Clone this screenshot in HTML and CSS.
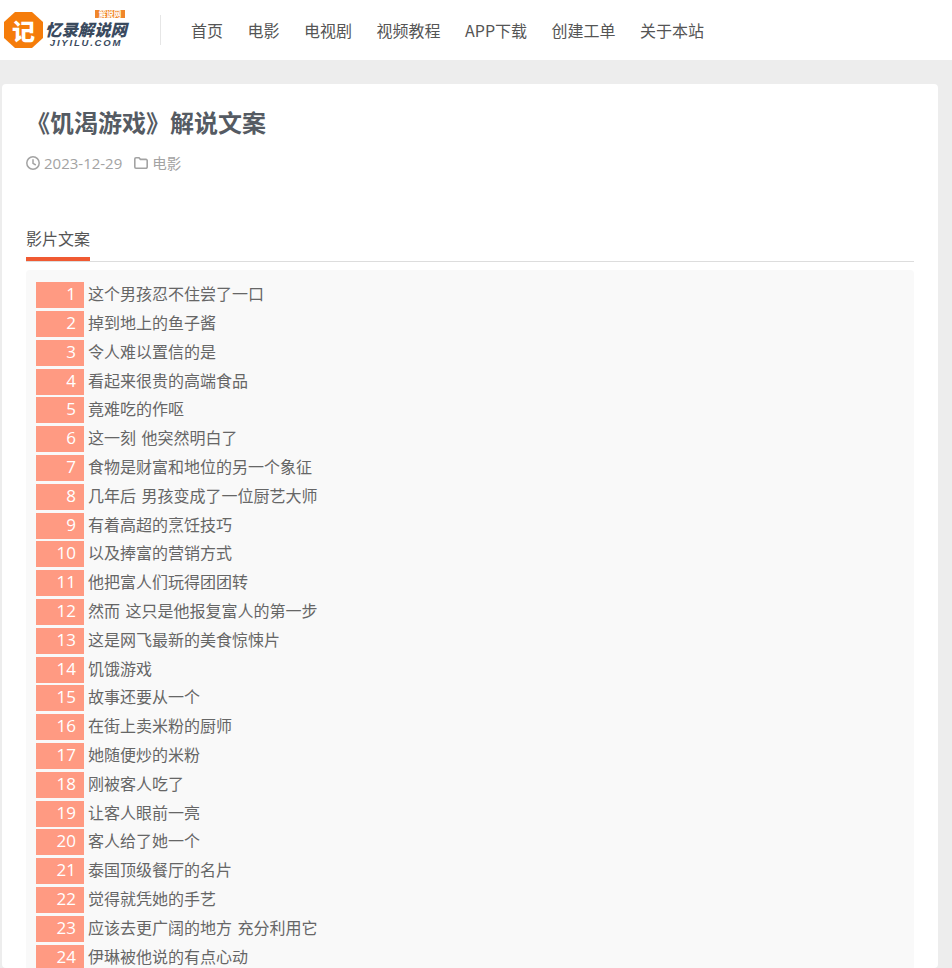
FILE: index.html
```html
<!DOCTYPE html>
<html lang="zh-CN">
<head>
<meta charset="utf-8">
<title>《饥渴游戏》解说文案</title>
<link rel="stylesheet" href="styles.css">
</head>
<body>
<header class="topbar">
  <a class="logo">
    <svg class="logo-mark" width="39" height="36" viewBox="0 0 39 36"><polygon points="11,0 28,0 39,10 39,26 28,36 11,36 0,26 0,10" fill="#f57c0a"/></svg>
    <span class="logo-mark-text">记</span>
    <span class="logo-words">
      <span class="logo-cn">忆录解说网</span>
      <span class="logo-en">JIYILU.COM</span>
    </span>
    <span class="logo-tag">解说网</span>
  </a>
  <nav class="nav">
    <a>首页</a><a>电影</a><a>电视剧</a><a>视频教程</a><a>APP下载</a><a>创建工单</a><a>关于本站</a>
  </nav>
</header>
<main class="card">
  <h1 class="title">《饥渴游戏》解说文案</h1>
  <div class="meta">
    <span class="meta-item meta-date">
      <svg width="14" height="14" viewBox="0 0 14 14" fill="none" stroke="#a3a3a3" stroke-width="1.5"><circle cx="7" cy="7" r="6.2"/><path d="M7 3.2V7.4L9.8 9"/></svg>
      2023-12-29
    </span>
    <span class="meta-item">
      <svg width="14" height="12" viewBox="0 0 14 12" fill="none" stroke="#a3a3a3" stroke-width="1.6"><path d="M.8 2a1.2 1.2 0 0 1 1.2-1.2H5L6.4 2.4H12A1.2 1.2 0 0 1 13.2 3.6V10A1.2 1.2 0 0 1 12 11.2H2A1.2 1.2 0 0 1 .8 10Z"/></svg>
      电影
    </span>
  </div>
  <div class="tabs"><span class="tab">影片文案</span></div>
  <ol class="script">
    <li><span class="num">1</span>这个男孩忍不住尝了一口</li>
    <li><span class="num">2</span>掉到地上的鱼子酱</li>
    <li><span class="num">3</span>令人难以置信的是</li>
    <li><span class="num">4</span>看起来很贵的高端食品</li>
    <li><span class="num">5</span>竟难吃的作呕</li>
    <li><span class="num">6</span>这一刻 他突然明白了</li>
    <li><span class="num">7</span>食物是财富和地位的另一个象征</li>
    <li><span class="num">8</span>几年后 男孩变成了一位厨艺大师</li>
    <li><span class="num">9</span>有着高超的烹饪技巧</li>
    <li><span class="num">10</span>以及捧富的营销方式</li>
    <li><span class="num">11</span>他把富人们玩得团团转</li>
    <li><span class="num">12</span>然而 这只是他报复富人的第一步</li>
    <li><span class="num">13</span>这是网飞最新的美食惊悚片</li>
    <li><span class="num">14</span>饥饿游戏</li>
    <li><span class="num">15</span>故事还要从一个</li>
    <li><span class="num">16</span>在街上卖米粉的厨师</li>
    <li><span class="num">17</span>她随便炒的米粉</li>
    <li><span class="num">18</span>刚被客人吃了</li>
    <li><span class="num">19</span>让客人眼前一亮</li>
    <li><span class="num">20</span>客人给了她一个</li>
    <li><span class="num">21</span>泰国顶级餐厅的名片</li>
    <li><span class="num">22</span>觉得就凭她的手艺</li>
    <li><span class="num">23</span>应该去更广阔的地方 充分利用它</li>
    <li><span class="num">24</span>伊琳被他说的有点心动</li>
  </ol>
</main>
</body>
</html>
```
FILE: styles.css
```css
* { box-sizing: border-box; }
html, body { margin: 0; height: 968px; overflow: hidden; }
body {
  background: #ededed;
  font-family: "Noto Sans CJK SC", "Open Sans", sans-serif;
  color: #555;
}
.topbar {
  height: 60px;
  background: #fff;
  display: flex;
  align-items: center;
}
.logo {
  position: relative;
  width: 161px;
  height: 60px;
  flex: none;
}
.logo::after {
  content: "";
  position: absolute;
  right: 0; top: 15px;
  width: 1px; height: 30px;
  background: #e6e6e6;
}
.logo-mark { position: absolute; left: 4px; top: 12px; }
.logo-mark-text {
  position: absolute; left: 12px; top: 10px;
  font: 900 23px/40px "Noto Sans CJK SC", sans-serif;
  color: #fff;
}
.logo-words {
  position: absolute; left: 45px; top: 21px;
  width: 82px;
  display: flex; flex-direction: column;
  align-items: center;
  color: #3a4a5e;
}
.logo-cn {
  font: italic 900 16.4px/16px "Noto Sans CJK SC", sans-serif;
  white-space: nowrap;
}
.logo-en {
  font: italic 700 9.5px/8px "Liberation Sans", sans-serif;
  letter-spacing: 1.8px;
  margin-top: 2px;
  white-space: nowrap;
}
.logo-tag {
  position: absolute; left: 95px; top: 10px;
  width: 30px; height: 8px;
  background: #f0862a;
  color: #fff;
  font: 700 7.5px/8px "Noto Sans CJK SC", sans-serif;
  text-align: center;
  white-space: nowrap;
}
.nav {
  display: flex;
  gap: 24.5px;
  margin-left: 30px;
  font-size: 16px;
  line-height: 60px;
  color: #555;
}
.card {
  margin: 24px 14px 0 2px;
  background: #fff;
  border-radius: 4px;
  height: 884px;
  padding: 0 24px;
}
.title {
  margin: 0;
  padding-top: 19px;
  font-size: 24px;
  line-height: 38px;
  font-weight: 700;
  color: #555b63;
}
.meta {
  display: flex;
  gap: 12px;
  margin-top: 12px;
  font-size: 14.5px;
  line-height: 20px;
  color: #a3a3a3;
}
.meta-item { display: flex; align-items: center; gap: 4px; }
.meta-date { font-family: "Open Sans", sans-serif; font-size: 15px; }
.tabs {
  margin-top: 50px;
  height: 39px;
  border-bottom: 1px solid #ddd;
}
.tab {
  display: block;
  height: 38px;
  padding-top: 3px;
  font-size: 16px;
  line-height: 24px;
  border-bottom: 4px solid #f05a32;
  width: 64px;
  white-space: nowrap;
  color: #555;
}
.script {
  list-style: none;
  margin: 8px 0 0;
  padding: 12.2px 10px 0;
  background: #f9f9f9;
  border-radius: 4px;
  height: 700px;
}
.script li {
  height: 28.8px;
  font-size: 16px;
  line-height: 22px;
  display: flex;
  color: #666;
  white-space: pre;
  word-spacing: 2px;
}
.num {
  width: 48px;
  height: 26px;
  margin-right: 4px;
  padding-right: 8px;
  background: #ff9a82;
  color: #fff;
  font-size: 17px;
  line-height: 24px;
  text-align: right;
  font-family: "Open Sans", sans-serif;
}
```
